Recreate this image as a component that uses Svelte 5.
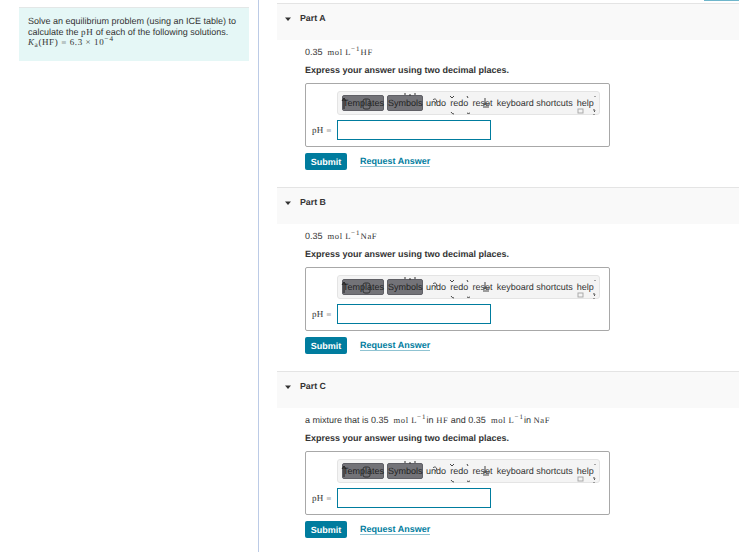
<script>
  const parts = [
    { id: 'A', lead: '', kind: 'HF' },
    { id: 'B', lead: '', kind: 'NaF' },
    { id: 'C', lead: 'mix', kind: '' }
  ];
</script>

{#snippet conc()}
  <span class="serif">mol</span> <span class="serif l">L<sup>−1</sup></span>
{/snippet}

<div class="page">
  <aside class="side">
    <div class="intro">
      <div>Solve an equilibrium problem (using an ICE table) to</div>
      <div>calculate the <span class="serif ph">pH</span> of each of the following solutions.</div>
      <div class="serif ka"><i>K</i><sub>a</sub>(HF) = 6.3 × 10<sup>−4</sup></div>
    </div>
  </aside>
  <main class="main">
    <div class="progress"></div>
    {#each parts as p}
      <section class="part">
        <header class="head">
          <svg class="caret" width="6" height="4" viewBox="0 0 6 4"><path d="M0 0.5h6L3 4z" fill="#333" /></svg>
          <span>Part {p.id}</span>
        </header>
        <div class="body">
          {#if p.lead === 'mix'}
            <p class="q">a mixture that is 0.35 &nbsp;{@render conc()}<span class="tight">in</span> <span class="serif">HF</span> and 0.35 &nbsp;{@render conc()}<span class="tight">in</span> <span class="serif">NaF</span></p>
          {:else}
            <p class="q">0.35 &nbsp;{@render conc()}<span class="serif">{p.kind}</span></p>
          {/if}
          <p class="hint">Express your answer using two decimal places.</p>
          <div class="box">
            <div class="toolbar">
              <span class="btn">Templates
                <svg class="ov ov-t" width="26" height="16" viewBox="0 0 26 16"><path d="M1 13V3M-1 5l2-3 2 3" fill="none" stroke="#222" /><rect x="20" y="3" width="7" height="10" rx="2" fill="none" stroke="#333" /></svg>
              </span>
              <span class="btn">Symbols
                <svg class="ov ov-s" width="14" height="3" viewBox="0 0 14 3"><path d="M1 0v2M6 1v2M11 0v2" stroke="#333" /></svg>
              </span>
              <span class="tool">undo
                <svg class="ov ov-u" width="6" height="7" viewBox="0 0 6 7"><path d="M1 2a2 2 0 1 1 2 3" fill="none" stroke="#444" /></svg>
              </span>
              <span class="tool">redo
                <svg class="ov ov-r" width="22" height="20" viewBox="0 0 22 20"><path d="M1 1l2 2 2-2M18 1l1 2M2 17q1 2 3 2M18 18q1 1 3 0" fill="none" stroke="#444" /></svg>
              </span>
              <span class="tool">reset
                <svg class="ov ov-x" width="7" height="10" viewBox="0 0 7 10"><path d="M2 0v7M0 6h7M0 9h6" fill="none" stroke="#444" /></svg>
              </span>
              <span class="tool kb">keyboard shortcuts</span>
              <span class="tool">help
                <svg class="ov ov-h" width="20" height="20" viewBox="0 0 20 20"><path d="M18 1v1M16 15q2-1 2 1l-1 1M17 19v1" fill="none" stroke="#555" /><rect x="1" y="14" width="5" height="4" fill="none" stroke="#aaa" /></svg>
              </span>
            </div>
            <div class="answer">
              <label class="serif lab" for="ph{p.id}">pH =</label>
              <input id="ph{p.id}" class="field" type="text" />
            </div>
          </div>
          <div class="actions">
            <button class="submit" type="button">Submit</button>
            <span class="req">Request Answer</span>
          </div>
        </div>
      </section>
    {/each}
  </main>
</div>

<style>
  :global(body) {
    margin: 0;
    background: #fff;
  }
  .page {
    display: flex;
    width: 739px;
    height: 552px;
    overflow: hidden;
    font-family: "Liberation Sans", Arial, sans-serif;
    color: #333;
    font-size: 9px;
    text-rendering: geometricPrecision;
  }
  .side {
    box-sizing: border-box;
    width: 259px;
    flex: none;
    border-right: 1px solid #bccbe6;
    padding: 7px 9px 0 19px;
  }
  .intro {
    height: 54px;
    box-sizing: border-box;
    background: #e5f7f6;
    border-top: 1px solid #e3e7e7;
    padding: 8px 9px;
    line-height: 10.7px;
    font-size: 9px;
  }
  .serif {
    font-family: "Liberation Serif", "DejaVu Serif", serif;
  }
  .ph {
    letter-spacing: 0.6px;
  }
  .ka {
    font-size: 9px;
    letter-spacing: 0.6px;
    font-weight: 400;
    white-space: nowrap;
  }
  sup, sub {
    font-size: 80%;
    line-height: 0;
  }
  sub {
    vertical-align: -1.5px;
  }
  sup {
    letter-spacing: 1.1px;
  }
  .main {
    flex: 1;
    position: relative;
    padding: 3px 0 0 18px;
    min-width: 0;
  }
  .progress {
    position: absolute;
    top: 0;
    right: 0;
    width: 35px;
    height: 1px;
    background: #6fb6cb;
  }
  .part {
    height: 184px;
    box-sizing: border-box;
  }
  .head {
    height: 37px;
    box-sizing: border-box;
    background: #f9f9f9;
    border-top: 1px solid #e4e4e4;
    padding: 9px 0 0 8px;
    display: flex;
    align-items: flex-start;
    font-weight: 700;
    font-size: 8.8px;
    line-height: 10px;
    color: #333;
  }
  .caret {
    margin: 4px 9px 0 0;
  }
  .body {
    padding: 7px 0 0 28px;
    width: 305px;
  }
  .q {
    margin: 0;
    font-size: 9px;
    line-height: 11px;
    white-space: nowrap;
    height: 11px;
  }
  .q .serif {
    font-size: 8.6px;
    letter-spacing: 0.6px;
  }
  .tight {
    font-size: 9px;
  }
  .hint {
    margin: 7px 0 0;
    font-weight: 700;
    font-size: 9px;
    line-height: 11px;
    color: #333;
  }
  .box {
    box-sizing: border-box;
    margin-top: 7px;
    height: 64px;
    border: 1px solid #a8a8a8;
    border-radius: 2px;
    padding: 7px 0 0 31px;
  }
  .toolbar {
    box-sizing: border-box;
    width: 263px;
    height: 24px;
    background: #f4f4f4;
    border: 1px solid #e4e4e4;
    border-radius: 3px;
    display: flex;
    align-items: center;
    padding: 0 3px 0 4px;
    font-size: 9px;
    color: #333;
    white-space: nowrap;
  }
  .btn, .tool {
    position: relative;
  }
  .btn {
    box-sizing: border-box;
    height: 16px;
    line-height: 14px;
    background: #737378;
    border: 1px solid #606066;
    border-radius: 2px;
    color: #222;
  }
  .btn:first-child {
    width: 42px;
    margin-right: 3px;
  }
  .btn:nth-child(2) {
    width: 36px;
    margin-right: 3px;
  }
  .tool {
    margin-right: 4.2px;
  }
  .kb {
    margin-right: 4px;
  }
  .tool:last-child {
    margin-right: 0;
  }
  .ov {
    position: absolute;
    pointer-events: none;
    overflow: visible;
  }
  .ov-t { left: 0; top: 0; }
  .ov-s { left: 16px; top: -3px; }
  .ov-u { left: 6px; top: 0; }
  .ov-r { left: -1px; top: -3px; }
  .ov-x { left: 11px; top: 0; }
  .ov-h { left: 0; top: -3px; }
  .answer {
    display: flex;
    align-items: center;
    margin-top: 5px;
  }
  .lab {
    width: 31px;
    margin-left: -25px;
    margin-right: -6px;
    font-size: 9px;
    letter-spacing: 0.3px;
    white-space: nowrap;
  }
  .field {
    box-sizing: border-box;
    width: 154px;
    height: 20px;
    border: 1px solid #007c9e;
    background: #fff;
    padding: 0;
    outline: none;
    margin: 0;
  }
  .actions {
    display: flex;
    align-items: center;
    margin-top: 6px;
  }
  .submit {
    box-sizing: border-box;
    width: 42px;
    height: 17px;
    border: 0;
    padding: 0;
    border-radius: 2px;
    background: #007c9e;
    color: #fff;
    font: 700 9px "Liberation Sans", Arial, sans-serif;
    text-rendering: geometricPrecision;
  }
  .req {
    margin-left: 13px;
    color: #007c9e;
    font-weight: 700;
    font-size: 9px;
    border-bottom: 1px solid #8fc3d2;
    line-height: 9px;
  }
</style>
